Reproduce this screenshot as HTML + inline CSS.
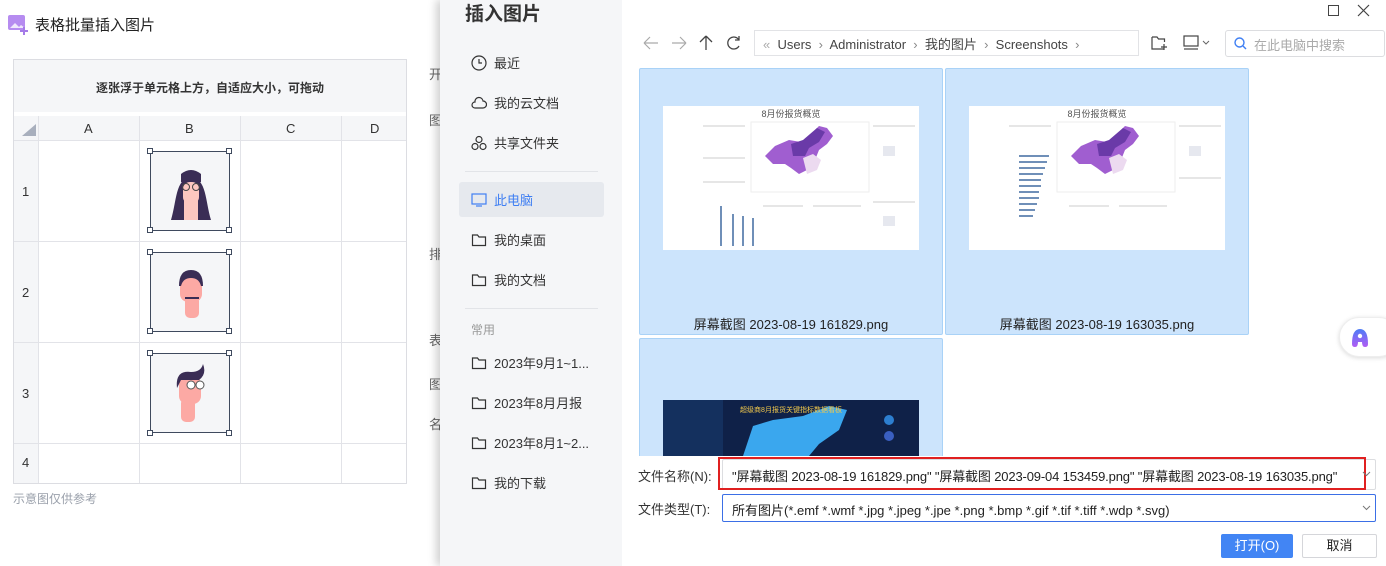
<!DOCTYPE html>
<html><head><meta charset="utf-8"><style>
*{margin:0;padding:0;box-sizing:border-box}
body{width:1386px;height:566px;overflow:hidden;background:#fff;font-family:"Liberation Sans","Noto Sans CJK SC",sans-serif;color:#333;position:relative}
.a{position:absolute}
.t{font-size:13px;color:#333;white-space:nowrap}
.line{background:#e2e3e8}
.img{position:absolute;border:1.5px solid #3f4a5e;background:#f5f6f8;width:80px;height:80px}
.h{position:absolute;width:6px;height:6px;border:1px solid #3f4a5e;background:#fff}
.tile{position:absolute;background:#cce4fc;border:1px solid #a9d2f7;border-radius:2px}
.sb{position:absolute;left:471px;font-size:13px;color:#333;display:flex;align-items:center;white-space:nowrap}
.sb svg{margin-right:7px}
</style></head><body>

<svg class="a" style="left:7px;top:14px" width="22" height="22" viewBox="0 0 22 22"><rect x="1" y="1" width="17" height="15" rx="2" fill="#b68cf0"/><path d="M3 14l5-5 4 4 2-2 4 3z" fill="#fff" opacity=".8"/><path d="M17 13v8M13 17h8" stroke="#a57be8" stroke-width="2"/></svg>
<div class="a" style="left:35px;top:14px;font-size:15px;color:#222">表格批量插入图片</div>

<div class="a" style="left:13px;top:59px;width:394px;height:425px;border:1px solid #dcdde2"></div>
<div class="a" style="left:14px;top:60px;width:392px;height:52px;background:#f5f6f8"></div>
<div class="a" style="left:14px;top:79px;width:392px;text-align:center;font-size:12px;font-weight:bold;color:#333">逐张浮于单元格上方，自适应大小，可拖动</div>
<div class="a" style="left:14px;top:116px;width:392px;height:24px;background:#f5f6f8"></div>
<div class="a" style="left:14px;top:140px;width:24px;height:343px;background:#f5f6f8"></div>
<svg class="a" style="left:22px;top:124px" width="14" height="12"><path d="M14 0V12H0z" fill="#a8afbd"/></svg>
<div class="a line" style="left:38px;top:116px;width:1px;height:367px"></div>
<div class="a line" style="left:139px;top:116px;width:1px;height:367px"></div>
<div class="a line" style="left:240px;top:116px;width:1px;height:367px"></div>
<div class="a line" style="left:341px;top:116px;width:1px;height:367px"></div>
<div class="a line" style="left:14px;top:140px;width:392px;height:1px"></div>
<div class="a line" style="left:14px;top:241px;width:392px;height:1px"></div>
<div class="a line" style="left:14px;top:342px;width:392px;height:1px"></div>
<div class="a line" style="left:14px;top:443px;width:392px;height:1px"></div>
<div class="a t" style="left:84px;top:121px">A</div>
<div class="a t" style="left:185px;top:121px">B</div>
<div class="a t" style="left:286px;top:121px">C</div>
<div class="a t" style="left:370px;top:121px">D</div>
<div class="a t" style="left:22px;top:184px">1</div>
<div class="a t" style="left:22px;top:285px">2</div>
<div class="a t" style="left:22px;top:386px">3</div>
<div class="a t" style="left:22px;top:455px">4</div>

<div class="img" style="left:150px;top:151px"></div>
<svg class="a" style="left:163px;top:160px" width="56" height="62"><path d="M8 60c6-20 4-40 20-44 16 4 14 24 20 44z" fill="#3a2d55"/><rect x="20" y="22" width="16" height="22" rx="7" fill="#fcc7c0"/><rect x="21" y="40" width="14" height="20" fill="#fcc7c0"/><circle cx="23" cy="27" r="3.5" fill="none" stroke="#444" stroke-width="1"/><circle cx="33" cy="27" r="3.5" fill="none" stroke="#444" stroke-width="1"/><path d="M18 14q10-8 20 0v8H18z" fill="#3a2d55"/></svg>
<div class="img" style="left:150px;top:252px"></div>
<svg class="a" style="left:163px;top:260px" width="56" height="62"><rect x="17" y="14" width="22" height="28" rx="8" fill="#fca9a4"/><rect x="22" y="36" width="14" height="22" rx="5" fill="#fca9a4"/><path d="M16 26q0-16 12-16t12 16h-2q-2-8-10-8t-10 8z" fill="#3a2d55"/><path d="M22 38h14" stroke="#3a2d55" stroke-width="2"/></svg>
<div class="img" style="left:150px;top:353px"></div>
<svg class="a" style="left:163px;top:360px" width="56" height="64"><rect x="16" y="16" width="22" height="28" rx="8" fill="#fca9a4"/><rect x="18" y="38" width="14" height="24" rx="5" fill="#fca9a4"/><path d="M14 28q-2-18 14-16 10 0 12-8 4 10-4 16H18z" fill="#3a2d55"/><circle cx="28" cy="25" r="4" fill="#fff" stroke="#555"/><circle cx="37" cy="25" r="4" fill="#fff" stroke="#555"/></svg>
<div class="h" style="left:147px;top:148px"></div><div class="h" style="left:226px;top:148px"></div><div class="h" style="left:147px;top:227px"></div><div class="h" style="left:226px;top:227px"></div>
<div class="h" style="left:147px;top:249px"></div><div class="h" style="left:226px;top:249px"></div><div class="h" style="left:147px;top:328px"></div><div class="h" style="left:226px;top:328px"></div>
<div class="h" style="left:147px;top:350px"></div><div class="h" style="left:226px;top:350px"></div><div class="h" style="left:147px;top:430px"></div><div class="h" style="left:226px;top:430px"></div>

<div class="a" style="left:13px;top:490px;font-size:12px;color:#9aa0ab">示意图仅供参考</div>
<div class="a" style="left:429px;top:64px;font-size:13px;color:#666">开</div>
<div class="a" style="left:429px;top:110px;font-size:13px;color:#666">图</div>
<div class="a" style="left:429px;top:244px;font-size:13px;color:#666">排</div>
<div class="a" style="left:429px;top:330px;font-size:13px;color:#666">表</div>
<div class="a" style="left:429px;top:374px;font-size:13px;color:#666">图</div>
<div class="a" style="left:429px;top:414px;font-size:13px;color:#666">名</div>

<div class="a" style="left:440px;top:0;width:946px;height:566px;background:#fff;box-shadow:-4px 0 8px rgba(0,0,0,.18)"></div>
<div class="a" style="left:440px;top:0;width:182px;height:566px;background:#f5f6f8"></div>
<div class="a" style="left:465px;top:-1px;font-size:19px;font-weight:bold;color:#333">插入图片</div>

<div class="sb" style="top:53px"><svg width="16" height="16"><circle cx="8" cy="8" r="7" fill="none" stroke="#333" stroke-width="1.2"/><path d="M8 4v4h3" fill="none" stroke="#333" stroke-width="1.2"/></svg>最近</div>
<div class="sb" style="top:93px"><svg width="16" height="16"><path d="M4 13a3 3 0 010-6 4 4 0 018-1 3.5 3.5 0 010 7z" fill="none" stroke="#333" stroke-width="1.2"/></svg>我的云文档</div>
<div class="sb" style="top:133px"><svg width="16" height="16"><circle cx="8" cy="4.5" r="3" fill="none" stroke="#333" stroke-width="1.2"/><circle cx="4" cy="11.5" r="3" fill="none" stroke="#333" stroke-width="1.2"/><circle cx="12" cy="11.5" r="3" fill="none" stroke="#333" stroke-width="1.2"/></svg>共享文件夹</div>
<div class="a" style="left:465px;top:171px;width:133px;height:1px;background:#e2e4e8"></div>
<div class="a" style="left:459px;top:182px;width:145px;height:35px;background:#e6e9ee;border-radius:3px"></div>
<div class="sb" style="top:190px;color:#3f7ff3"><svg width="16" height="16"><rect x="1" y="2" width="14" height="10" fill="none" stroke="#3f7ff3" stroke-width="1.2"/><path d="M5 14h6" stroke="#3f7ff3" stroke-width="1.2"/></svg>此电脑</div>
<div class="sb" style="top:230px"><svg width="16" height="16"><path d="M1.5 3h5l1.5 2h6.5v8.5h-13z" fill="none" stroke="#333" stroke-width="1.2"/></svg>我的桌面</div>
<div class="sb" style="top:270px"><svg width="16" height="16"><path d="M1.5 3h5l1.5 2h6.5v8.5h-13z" fill="none" stroke="#333" stroke-width="1.2"/></svg>我的文档</div>
<div class="a" style="left:465px;top:308px;width:133px;height:1px;background:#e2e4e8"></div>
<div class="a" style="left:471px;top:321px;font-size:12px;color:#999">常用</div>
<div class="sb" style="top:353px"><svg width="16" height="16"><path d="M1.5 3h5l1.5 2h6.5v8.5h-13z" fill="none" stroke="#333" stroke-width="1.2"/></svg>2023年9月1~1...</div>
<div class="sb" style="top:393px"><svg width="16" height="16"><path d="M1.5 3h5l1.5 2h6.5v8.5h-13z" fill="none" stroke="#333" stroke-width="1.2"/></svg>2023年8月月报</div>
<div class="sb" style="top:433px"><svg width="16" height="16"><path d="M1.5 3h5l1.5 2h6.5v8.5h-13z" fill="none" stroke="#333" stroke-width="1.2"/></svg>2023年8月1~2...</div>
<div class="sb" style="top:473px"><svg width="16" height="16"><path d="M1.5 3h5l1.5 2h6.5v8.5h-13z" fill="none" stroke="#333" stroke-width="1.2"/></svg>我的下载</div>

<div class="a" style="left:1328px;top:5px;width:11px;height:11px;border:1.2px solid #444"></div>
<svg class="a" style="left:1357px;top:4px" width="13" height="13"><path d="M1 1l11 11M12 1L1 12" stroke="#444" stroke-width="1.2"/></svg>

<svg class="a" style="left:642px;top:34px" width="100" height="18"><path d="M2 9h14M2 9l6-6M2 9l6 6" fill="none" stroke="#aaa" stroke-width="1.2"/><path d="M44 9h-14M44 9l-6-6M44 9l-6 6" fill="none" stroke="#aaa" stroke-width="1.2"/><path d="M64 16V2M64 2l-6 6M64 2l6 6" fill="none" stroke="#444" stroke-width="1.3"/><path d="M97 6a6 6 0 10 0 6M97 2v4h-4" fill="none" stroke="#444" stroke-width="1.3"/></svg>
<div class="a" style="left:754px;top:30px;width:385px;height:26px;border:1px solid #e2e3e6;background:#fff"></div>
<div class="a" style="left:763px;top:34px;font-size:13px;color:#444;white-space:nowrap"><span style="color:#aaa">«</span>&nbsp; Users &nbsp;<span style="color:#888">›</span>&nbsp; Administrator &nbsp;<span style="color:#888">›</span>&nbsp; 我的图片 &nbsp;<span style="color:#888">›</span>&nbsp; Screenshots &nbsp;<span style="color:#888">›</span></div>
<svg class="a" style="left:1150px;top:34px" width="70" height="18"><path d="M2 3h5l1.5 2h6v3M14 15H2V3" fill="none" stroke="#444" stroke-width="1.2"/><path d="M14 10v6M11 13h6" stroke="#444" stroke-width="1.2"/><rect x="34" y="2" width="14" height="10" fill="none" stroke="#444" stroke-width="1.2"/><path d="M34 15h14" stroke="#444" stroke-width="1.2"/><path d="M53 7l3 3 3-3" fill="none" stroke="#666"/></svg>
<div class="a" style="left:1225px;top:30px;width:160px;height:27px;border:1px solid #dcdde0;border-radius:3px"></div>
<svg class="a" style="left:1234px;top:37px" width="13" height="13"><circle cx="5.5" cy="5.5" r="4.5" fill="none" stroke="#3f7ff3" stroke-width="1.4"/><path d="M9 9l3 3" stroke="#3f7ff3" stroke-width="1.4"/></svg>
<div class="a" style="left:1254px;top:35px;font-size:13px;color:#aaa">在此电脑中搜索</div>

<div class="tile" style="left:639px;top:68px;width:304px;height:267px"></div>
<div class="tile" style="left:945px;top:68px;width:304px;height:267px"></div>
<div class="tile" style="left:639px;top:338px;width:304px;height:130px"></div>
<svg class="a" style="left:663px;top:106px" width="256" height="144"><rect width="256" height="144" fill="#fff"/><text x="128" y="11" font-size="9" text-anchor="middle" fill="#555" font-family="Liberation Sans,Noto Sans CJK SC,sans-serif">8月份报货概览</text><rect x="88" y="16" width="118" height="70" fill="#fff" stroke="#eee"/><path d="M112 40l14-6 12 2 8-6 10-10 8 2 6 8-6 8-8 6-4 10-8 10-8 4-8-6-6-4-12 0-8-8z" fill="#a05ed0"/><path d="M128 38l12-4 14-12 8 4-6 10-10 6-4 8-12 0z" fill="#6a3aa8"/><path d="M140 52l10-4 8 6-4 10-10 4z" fill="#ecdaf0"/><path d="M40 20h42M40 52h42M40 76h42M210 20h42M210 96h42M100 100h40M150 100h48" stroke="#ccc"/><path d="M58 100v40M70 108v32M80 110v30M90 112v28" stroke="#6f8fb8" stroke-width="2"/><rect x="220" y="40" width="12" height="10" fill="#e6e8ef"/><rect x="220" y="110" width="12" height="10" fill="#e6e8ef"/></svg>
<svg class="a" style="left:969px;top:106px" width="256" height="144"><rect width="256" height="144" fill="#fff"/><text x="128" y="11" font-size="9" text-anchor="middle" fill="#555" font-family="Liberation Sans,Noto Sans CJK SC,sans-serif">8月份报货概览</text><rect x="88" y="16" width="118" height="70" fill="#fff" stroke="#eee"/><path d="M112 40l14-6 12 2 8-6 10-10 8 2 6 8-6 8-8 6-4 10-8 10-8 4-8-6-6-4-12 0-8-8z" fill="#a05ed0"/><path d="M128 38l12-4 14-12 8 4-6 10-10 6-4 8-12 0z" fill="#6a3aa8"/><path d="M140 52l10-4 8 6-4 10-10 4z" fill="#ecdaf0"/><path d="M40 20h42M210 20h42M210 72h42M100 100h40M150 100h48" stroke="#ccc"/><path d="M50 50h30M50 56h28M50 62h26M50 68h24M50 74h22M50 80h22M50 86h20M50 92h20M50 98h18M50 104h16M50 110h14" stroke="#6f8fb8" stroke-width="2"/><rect x="220" y="40" width="12" height="10" fill="#e6e8ef"/></svg>
<svg class="a" style="left:663px;top:400px" width="256" height="56"><rect width="256" height="56" fill="#0f2148"/><rect x="0" y="0" width="60" height="56" fill="#14305e"/><path d="M80 56l10-30 20-6 30-4 26-10 18 4-8 20-20 14-10 12z" fill="#3aa7ee"/><text x="128" y="12" font-size="7" text-anchor="middle" fill="#f2c94c">超级商8月报货关键指标数据看板</text><circle cx="226" cy="20" r="5" fill="#2d7fd0"/><circle cx="226" cy="36" r="5" fill="#3a5fc0"/></svg>
<div class="a" style="left:639px;top:314px;width:304px;text-align:center;font-size:13px;color:#222">屏幕截图 2023-08-19 161829.png</div>
<div class="a" style="left:945px;top:314px;width:304px;text-align:center;font-size:13px;color:#222">屏幕截图 2023-08-19 163035.png</div>

<div class="a" style="left:622px;top:456px;width:764px;height:110px;background:#fff"></div>
<div class="a" style="left:638px;top:466px;font-size:13px;color:#333">文件名称(N):</div>
<div class="a" style="left:638px;top:499px;font-size:13px;color:#333">文件类型(T):</div>
<div class="a" style="left:722px;top:459px;width:654px;height:31px;border:1px solid #dcdde0;border-radius:2px"></div>
<div class="a" style="left:718px;top:457px;width:648px;height:33px;border:2px solid #e02020"></div>
<div class="a" style="left:732px;top:466px;font-size:13px;color:#222;white-space:nowrap;letter-spacing:-0.15px">"屏幕截图 2023-08-19 161829.png" "屏幕截图 2023-09-04 153459.png" "屏幕截图 2023-08-19 163035.png"</div>
<div class="a" style="left:722px;top:494px;width:654px;height:28px;border:1px solid #3b6fe6;border-radius:2px"></div>
<div class="a" style="left:732px;top:500px;font-size:13px;color:#222;white-space:nowrap">所有图片(*.emf *.wmf *.jpg *.jpeg *.jpe *.png *.bmp *.gif *.tif *.tiff *.wdp *.svg)</div>
<svg class="a" style="left:1362px;top:471px" width="9" height="6"><path d="M1 1l3.5 3.5L8 1" fill="none" stroke="#777"/></svg>
<svg class="a" style="left:1362px;top:505px" width="9" height="6"><path d="M1 1l3.5 3.5L8 1" fill="none" stroke="#777"/></svg>
<div class="a" style="left:1221px;top:534px;width:72px;height:24px;background:#4285f4;border-radius:2px;color:#fff;font-size:13px;text-align:center;line-height:24px">打开(O)</div>
<div class="a" style="left:1302px;top:534px;width:75px;height:24px;border:1px solid #d5d6da;border-radius:2px;color:#222;font-size:13px;text-align:center;line-height:22px">取消</div>

<div class="a" style="left:1339px;top:317px;width:60px;height:40px;border-radius:20px;background:#fff;box-shadow:0 1px 5px rgba(0,0,0,.15);border:1px solid #eee"></div>
<svg class="a" style="left:1349px;top:326px" width="22" height="22"><defs><linearGradient id="g" x1="0" y1="0" x2="0" y2="1"><stop offset="0" stop-color="#4c7cf6"/><stop offset="1" stop-color="#b25cf4"/></linearGradient></defs><path d="M3 18Q3 3 11 3t8 15q0 3-3 3t-3-5h-4q0 5-3 5t-3-3z" fill="url(#g)"/><circle cx="11" cy="10" r="2.2" fill="#fff"/></svg>
</body></html>
